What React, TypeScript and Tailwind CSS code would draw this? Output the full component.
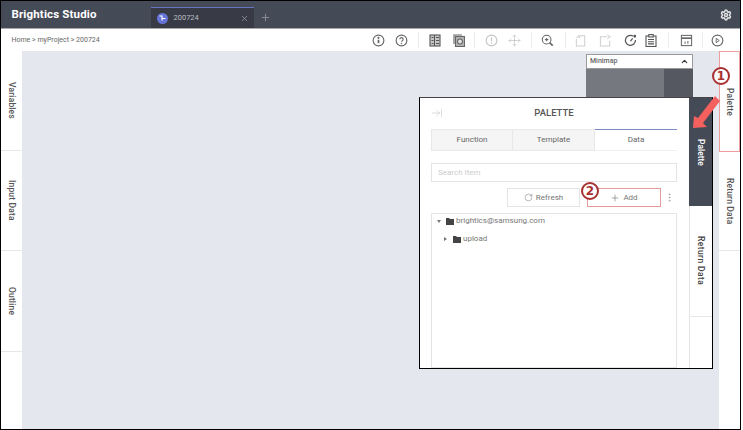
import { Plus, X, RotateCw, ChevronUp, Move, Settings, EllipsisVertical, ArrowRightToLine } from "lucide-react";

const V = "[writing-mode:vertical-rl]";

function Circle({ c, kids }: { c: string; kids: React.ReactNode }) {
  return (
    <svg width="13" height="13" viewBox="0 0 15 15" fill="none" stroke={c} strokeWidth="1.3" className="shrink-0">
      <circle cx="7.5" cy="7.5" r="6.2" />
      {kids}
    </svg>
  );
}

function Sep() {
  return <div className="w-px h-[16px] bg-[#ececec] shrink-0" />;
}

function ToolIcon({ children }: { children: React.ReactNode }) {
  return <div className="w-[13px] h-[13px] flex items-center justify-center shrink-0">{children}</div>;
}

function Toolbar() {
  const dark = "#666";
  const light = "#c4c4c4";
  return (
    <div className="flex items-center">
      <div className="flex items-center gap-[10px] pr-[10px]">
        <Circle c={dark} kids={<><path d="M7.5 6.6v4" strokeWidth="2" /><circle cx="7.5" cy="4.4" r="0.6" /></>} />
        <Circle c={dark} kids={<><path d="M5.6 6a1.9 1.9 0 1 1 2.8 1.7c-.6.3-.9.7-.9 1.3" /><circle cx="7.5" cy="11" r="0.3" /></>} />
      </div>
      <Sep />
      <div className="flex items-center gap-[11px] px-[9px]">
        <ToolIcon>
          <svg width="12" height="13" viewBox="0 0 12 13" fill="none" stroke="#555" strokeWidth="1.1">
            <rect x="1" y="1" width="10" height="11" fill="#c9c9c9" />
            <path d="M5.5 1v11M2.5 3.5h2M2.5 6.5h2M2.5 9.5h2M7 3.5h3M7 6.5h3M7 9.5h3" />
          </svg>
        </ToolIcon>
        <ToolIcon>
          <svg width="12" height="13" viewBox="0 0 12 13" fill="none" stroke="#666" strokeWidth="1.1">
            <path d="M1 10V1h8" />
            <rect x="2.5" y="2.5" width="9" height="10" fill="#b4b4b4" />
            <circle cx="7" cy="7.5" r="2.5" fill="#e4e4e4" />
          </svg>
        </ToolIcon>
      </div>
      <Sep />
      <div className="flex items-center gap-[10px] px-[10px]">
        <Circle c={light} kids={<><path d="M7.5 4v4.4" /><circle cx="7.5" cy="10.8" r="0.3" /></>} />
        <ToolIcon><Move size={13} color="#b8b8b8" strokeWidth={1.1} /></ToolIcon>
      </div>
      <Sep />
      <div className="flex items-center pl-[9px] pr-[11px]">
        <ToolIcon>
          <svg width="13" height="13" viewBox="0 0 15 15" fill="none" stroke={dark} strokeWidth="1.2">
            <circle cx="6.5" cy="6.5" r="5" />
            <path d="M4.5 6.5h4M6.5 4.5v4" />
            <path d="M10 10l3.5 3.5" strokeWidth="1.9" />
          </svg>
        </ToolIcon>
      </div>
      <Sep />
      <div className="flex items-center pl-[8px] pr-[11px]">
        <ToolIcon>
          <svg width="13" height="13" viewBox="0 0 14 14" fill="none" stroke="#cfcfcf" strokeWidth="1.1">
            <path d="M2.5 5V13h9V2H5M5 2L3 4M5 2l1.5 2.5" />
          </svg>
        </ToolIcon>
        <div className="w-[12px]" />
        <ToolIcon>
          <svg width="13" height="13" viewBox="0 0 14 14" fill="none" stroke="#cfcfcf" strokeWidth="1.1">
            <path d="M11.5 7v6h-10V3h7M9 1l3 2-3 2" />
          </svg>
        </ToolIcon>
        <div className="w-[12px]" />
        <ToolIcon>
          <svg width="13" height="13" viewBox="0 0 15 15" fill="none" stroke="#555" strokeWidth="1.4">
            <path d="M10.5 2.4A5.8 5.8 0 1 0 13.2 7" />
            <path d="M7.5 8.2L10 5" />
            <circle cx="12.4" cy="2.6" r="0.9" fill="#555" />
          </svg>
        </ToolIcon>
        <div className="w-[7px]" />
        <ToolIcon>
          <svg width="12" height="13" viewBox="0 0 12 13" fill="none" stroke="#555" strokeWidth="1.1">
            <rect x="1" y="2" width="10" height="10.5" />
            <rect x="3.8" y="0.6" width="4.4" height="2.4" fill="#fff" />
            <path d="M3 5.5h6M3 7.7h6M3 9.9h6" />
          </svg>
        </ToolIcon>
      </div>
      <Sep />
      <div className="flex items-center pl-[11px] pr-[9px]">
        <ToolIcon>
          <svg width="13" height="13" viewBox="0 0 14 14" fill="none" stroke="#666" strokeWidth="1.1">
            <rect x="1.5" y="1.5" width="11" height="11" />
            <path d="M1.5 4.5h11" strokeWidth="1.8" />
            <path d="M5.5 8v2.5M8.5 7.5v3" />
          </svg>
        </ToolIcon>
      </div>
      <Sep />
      <div className="flex items-center pl-[8px] pr-[16px]">
        <Circle c={dark} kids={<path d="M6 5l3.5 2.5L6 10z" strokeWidth="1.1" />} />
      </div>
    </div>
  );
}

function SideTab({ label, h, border = true, cls = "" }: { label: string; h: string; border?: boolean; cls?: string }) {
  return (
    <div className={`${h} flex items-center justify-center shrink-0 ${border ? "border-b border-[#e6e6e6]" : ""} ${cls}`}>
      <span className={`${V} text-[8.5px] tracking-[0.15px] font-medium text-[#555]`}>{label}</span>
    </div>
  );
}

function Folder() {
  return (
    <svg width="8" height="7" viewBox="0 0 8 7" fill="#444" className="shrink-0 block">
      <path d="M0 0h3l1 1h4v6H0z" />
    </svg>
  );
}

function PalettePopup() {
  return (
    <div className="absolute left-[419px] top-[97px] w-[294px] h-[272px] border-[1.5px] border-black border-t-[#444] bg-white flex overflow-hidden">
      <div className="w-[269px] shrink-0 pl-[11px] pr-[12px] flex flex-col">
        <div className="h-[31px] shrink-0 flex items-center justify-center relative">
          <ArrowRightToLine size={12} color="#bbb" strokeWidth={1} className="absolute left-0 top-[9px]" />
          <span className="text-[9.5px] font-medium text-[#555]">PALETTE</span>
        </div>
        <div className="flex h-[22px] shrink-0 text-[8px] text-[#666]">
          <div className="w-[82px] flex items-center justify-center bg-[#f5f5f5] border border-[#e8e8e8]">Function</div>
          <div className="w-[82px] flex items-center justify-center bg-[#f5f5f5] border-y border-r border-[#e8e8e8]">Template</div>
          <div className="w-[82px] flex items-center justify-center bg-white border-t border-t-[#7f8cc4] border-b border-b-[#f0f0f0]">Data</div>
        </div>
        <div className="mt-[12px] h-[19px] shrink-0 border border-[#e4e4e4] flex items-center pl-[6px] text-[8px] text-[#ccc]">Search Item</div>
        <div className="mt-[6px] h-[19px] shrink-0 flex items-center pl-[76px] text-[8px] text-[#777]">
          <div className="w-[73px] h-full border border-[#e4e4e4] flex items-center justify-center gap-[3px]">
            <RotateCw size={9} color="#666" strokeWidth={1.2} />
            <span>Refresh</span>
          </div>
          <div className="ml-[7px] w-[74px] h-full border border-[#e79a9a] flex items-center justify-center gap-[3px]">
            <Plus size={10} color="#555" strokeWidth={1.2} />
            <span>Add</span>
          </div>
          <EllipsisVertical size={11} color="#999" strokeWidth={1.5} className="ml-[3px]" />
        </div>
        <div className="mt-[6px] grow border border-[#e4e4e4] text-[8px] text-[#777]">
          <div className="h-[14px] flex items-center pl-[5px]">
            <span className="w-0 h-0 border-x-[2.5px] border-x-transparent border-t-[3px] border-t-[#777]" />
            <span className="ml-[5px]"><Folder /></span>
            <span className="ml-[2px]">brightics@samsung.com</span>
          </div>
          <div className="h-[22px] flex items-center pl-[12px]">
            <span className="w-0 h-0 border-y-[2.5px] border-y-transparent border-l-[3px] border-l-[#777]" />
            <span className="ml-[6px]"><Folder /></span>
            <span className="ml-[2px]">upload</span>
          </div>
        </div>
      </div>
      <div className="grow border-l border-[#e4e4e4] flex flex-col">
        <div className="h-[108px] bg-[#454a57] flex justify-center items-start pt-[41px] -ml-px">
          <span className={`${V} text-[8.5px] font-medium text-white`}>Palette</span>
        </div>
        <div className="h-[111px] border-b border-[#e6e6e6] flex justify-center items-start pt-[30px]">
          <span className={`${V} text-[8.5px] font-medium text-[#444] tracking-[0.4px]`}>Return Data</span>
        </div>
      </div>
    </div>
  );
}

export default function App() {
  return (
    <div className="relative w-[743px] h-[430px] bg-white overflow-hidden font-['Roboto',sans-serif]">
      <div className="w-[741px] h-[430px] border-[1.5px] border-black flex flex-col">
        <header className="h-[27px] shrink-0 bg-[#454a57] flex items-end">
          <div className="w-[149.5px] h-full flex items-center pl-[10.5px] text-[11.5px] font-bold text-white tracking-[0.15px]">Brightics Studio</div>
          <div className="w-[103px] h-[21px] bg-[#383b45] border-t border-t-[#6674c4] flex items-center pl-[6px] pr-[4px]">
            <div className="w-[11px] h-[11px] rounded-full bg-[#6674d8] flex items-center justify-center">
              <svg width="7" height="6" viewBox="0 0 7 6" fill="none" stroke="#fff" strokeWidth="1.1">
                <path d="M0.5 1h2.5v2.5H6.5M3 3.5v2" />
              </svg>
            </div>
            <span className="ml-[6px] text-[7.5px] text-[#b9bcc4]">200724</span>
            <X size={9} color="#9a9da6" className="ml-auto mr-[1px]" />
          </div>
          <div className="h-[21px] ml-[6px] flex items-center"><Plus size={11} color="#8d909a" /></div>
          <div className="ml-auto w-[28px] h-full flex items-center justify-center">
            <Settings size={12} color="#dfe0e3" strokeWidth={3} />
          </div>
        </header>
        <div className="h-[23px] shrink-0 border-t border-[#a9a9a9] bg-white flex items-center justify-between pl-[10.5px] text-[7px] text-[#666]">
          <span>Home &gt; myProject &gt; 200724</span>
          <Toolbar />
        </div>
        <div className="grow flex min-h-0">
          <aside className="w-[21px] shrink-0 bg-white flex flex-col">
            <SideTab label="Variables" h="h-[100px]" />
            <SideTab label="Input Data" h="h-[100px]" />
            <SideTab label="Outline" h="h-[101px]" />
          </aside>
          <main className="grow bg-[#e4e7ee] relative" />
          <aside className="w-[21px] shrink-0 bg-white flex flex-col">
            <SideTab label="Palette" h="h-[101px]" border={false} cls="border border-[#ee9c9c]" />
            <SideTab label="Return Data" h="h-[99px]" />
          </aside>
        </div>
      </div>

      <div className="absolute left-[586px] top-[54px] w-[107px] h-[44px] flex flex-col">
        <div className="h-[15px] bg-white border border-[#9a9a9a] flex items-center justify-between px-[3px] text-[7px] font-medium text-[#666]">
          <span>Minimap</span>
          <ChevronUp size={9} color="#333" strokeWidth={3} />
        </div>
        <div className="grow flex">
          <div className="w-[78px] bg-[#75787f]" />
          <div className="grow bg-[#555861]" />
        </div>
      </div>

      <PalettePopup />

      <svg className="absolute left-[690px] top-[94px]" width="32" height="36" viewBox="0 0 32 36" fill="#f4605e">
        <polygon points="25,2 8,24 4,22 3,34 17,33 13,29 30,7" />
      </svg>

      <span className="absolute left-[712px] top-[67px] w-[18px] h-[18px] rounded-full border-2 border-[#a83030] bg-white/70 flex items-center justify-center font-['DejaVu_Sans',sans-serif] text-[12px] leading-none font-bold text-[#a83030]">1</span>
      <span className="absolute left-[581px] top-[182px] w-[18px] h-[18px] rounded-full border-2 border-[#a83030] bg-white flex items-center justify-center font-['DejaVu_Sans',sans-serif] text-[12px] leading-none font-bold text-[#a83030]">2</span>
    </div>
  );
}
